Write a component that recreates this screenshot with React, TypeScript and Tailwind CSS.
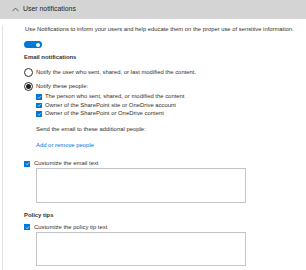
import React from "react";

function Check({ size = 6 }: { size?: number }) {
  return (
    <div
      className="bg-[#0078d4] flex items-center justify-center shrink-0"
      style={{ width: size, height: size }}
    >
      <svg width={size - 1} height={size - 1} viewBox="0 0 10 10">
        <path d="M2 5.2 L4.2 7.4 L8.2 2.8" fill="none" stroke="white" strokeWidth="1.4" />
      </svg>
    </div>
  );
}

export default function App() {
  return (
    <div className="w-[306px] h-[270px] bg-white overflow-hidden text-[#323130] font-['Liberation_Sans',Arial,sans-serif]">
      <div className="h-[19px] bg-[#d4d4d4] flex items-center">
        <svg className="ml-[12px]" width="7" height="5" viewBox="0 0 7 5">
          <path d="M0.5 4.2 L3.5 1 L6.5 4.2" fill="none" stroke="#444" strokeWidth="0.8" />
        </svg>
        <span className="ml-[4px] text-[6.9px] text-[#252423]">User notifications</span>
      </div>
      <div className="ml-[2px] border-l border-[#e3e3e3] h-[251px] pl-[21px]">
        <div className="mt-[6px] h-[8px] flex items-center text-[5.85px] pl-[1px] whitespace-nowrap">
          Use Notifications to inform your users and help educate them on the proper use of sensitive information.
        </div>
        <div className="mt-[8px] w-[18px] h-[7px] rounded-full bg-[#0078d4] flex items-center justify-end pr-[2px]">
          <div className="w-[4px] h-[4px] rounded-full bg-white" />
        </div>
        <div className="mt-[5px] h-[8px] flex items-center text-[5.9px] font-bold">Email notifications</div>
        <div className="mt-[6px] h-[10px] flex items-center">
          <div className="w-[9px] h-[9px] rounded-full border border-[#323130] shrink-0" />
          <span className="ml-[3px] text-[5.9px] whitespace-nowrap">
            Notify the user who sent, shared, or last modified the content.
          </span>
        </div>
        <div className="mt-[4px] h-[10px] flex items-center">
          <div className="w-[9px] h-[9px] rounded-full border border-[#323130] shrink-0 flex items-center justify-center">
            <div className="w-[5px] h-[5px] rounded-full bg-[#201f1e]" />
          </div>
          <span className="ml-[3px] text-[5.9px] whitespace-nowrap">Notify these people:</span>
        </div>
        <div className="mt-[1.5px] pl-[12px]">
          {[
            "The person who sent, shared, or modified the content",
            "Owner of the SharePoint site or OneDrive account",
            "Owner of the SharePoint or OneDrive content",
          ].map((t) => (
            <div key={t} className="h-[8.5px] flex items-center">
              <Check size={5.5} />
              <span className="ml-[3.5px] text-[5.9px] whitespace-nowrap">{t}</span>
            </div>
          ))}
        </div>
        <div className="mt-[7px] h-[8px] flex items-center pl-[12px] text-[5.9px]">
          Send the email to these additional people:
        </div>
        <div className="mt-[8px] h-[8px] flex items-center pl-[12px] text-[5.9px] text-[#0078d4]">
          Add or remove people
        </div>
        <div className="mt-[10.5px] h-[8px] flex items-center">
          <Check size={6} />
          <span className="ml-[4px] text-[5.9px]">Customize the email text</span>
        </div>
        <div className="mt-[0.5px] ml-[12px] w-[210px] h-[35px] border border-[#c4c4c4]" />
        <div className="mt-[8px] h-[8px] flex items-center text-[5.9px] font-bold">Policy tips</div>
        <div className="mt-[4px] h-[8px] flex items-center">
          <Check size={6} />
          <span className="ml-[4px] text-[5.9px]">Customize the policy tip text</span>
        </div>
        <div className="mt-[1px] ml-[12px] w-[210px] h-[34px] border border-[#c4c4c4]" />
      </div>
    </div>
  );
}
